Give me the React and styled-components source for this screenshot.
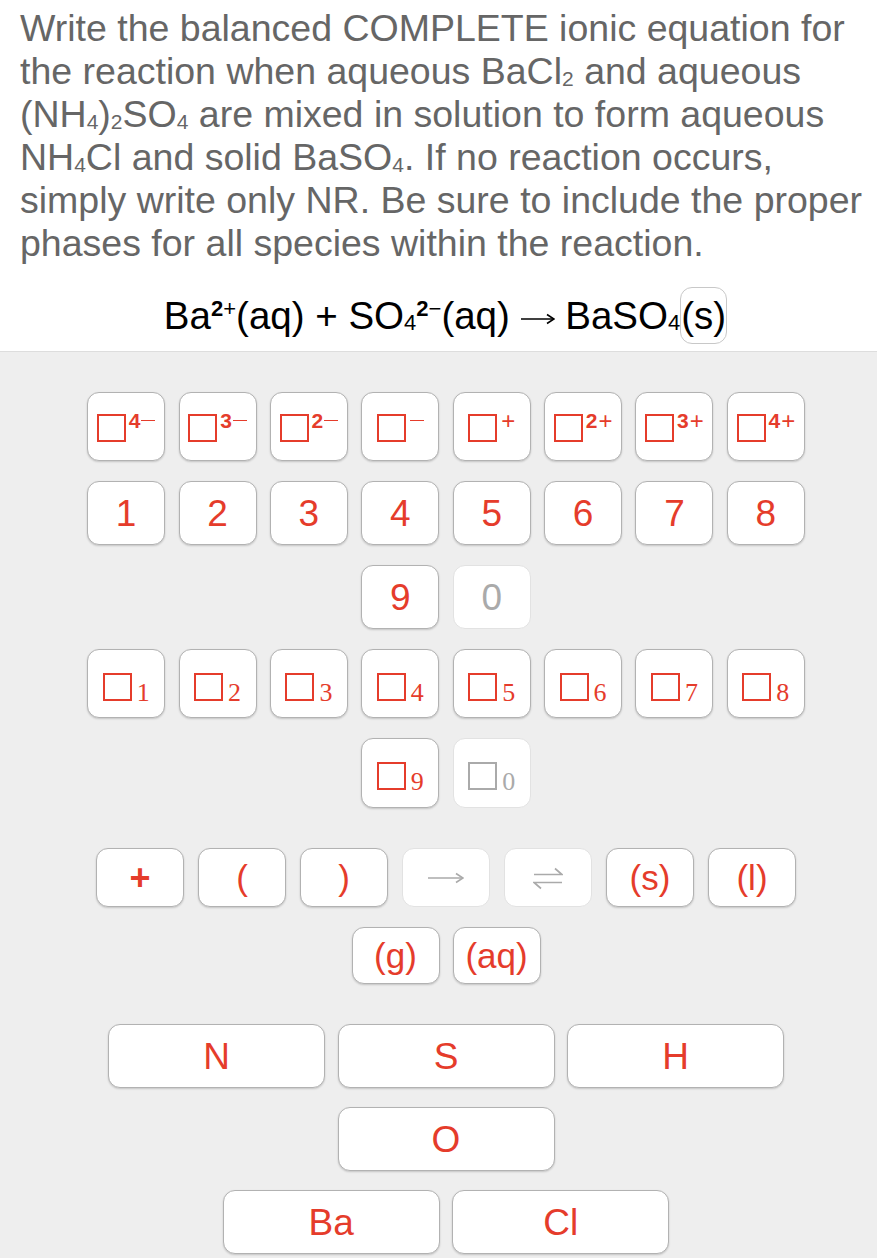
import React from "react"
import styled, { createGlobalStyle } from "styled-components"

const RED = "#e53c2b"
const OFF = "#aaaaaa"

const GlobalStyle = createGlobalStyle`
  html, body {
    margin: 0;
    padding: 0;
    background: #eeeeee;
  }
  body {
    font-family: "Liberation Sans", Arial, sans-serif;
  }
`

const Header = styled.header`
  background: #fff;
  border-bottom: 1px solid #dddddd;
  padding: 7px 10px 7px 20px;
`

const Prompt = styled.p`
  margin: 0;
  font: 37.5px/43px "Liberation Sans", Arial, sans-serif;
  color: #666;
  white-space: nowrap;
`

const PromptSub = styled.sub`
  font-size: 21px;
  line-height: 0;
  vertical-align: -2px;
`

const Equation = styled.div`
  margin-top: 22px;
  padding-left: 4px;
  text-align: center;
  font: 38.5px/43px "Liberation Sans", Arial, sans-serif;
  color: #000;
  white-space: nowrap;
`

const EqSup = styled.sup`
  font-size: 22px;
  line-height: 0;
  vertical-align: 13px;

  b {
    font-weight: bold;
  }
`

const EqSub = styled.sub`
  font-size: 22px;
  line-height: 0;
  vertical-align: -1px;
`

const Cursor = styled.span`
  display: inline-block;
  padding: 6px 0;
  border: 1px solid #c8c8c8;
  border-radius: 12px;
`

const Pad = styled.main`
  display: flex;
  flex-direction: column;
  align-items: center;
  gap: 40px;
  padding: 40px 0 4px 15px;
`

const Section = styled.div`
  display: flex;
  flex-direction: column;
  align-items: center;
  gap: ${(p) => p.$gap}px;
`

const Row = styled.div`
  display: flex;
  justify-content: center;
  gap: ${(p) => p.$gap}px;
`

const Key = styled.button`
  box-sizing: border-box;
  width: ${(p) => p.$w}px;
  height: ${(p) => p.$h}px;
  display: flex;
  align-items: center;
  justify-content: center;
  padding: 0;
  background: #fff;
  border-radius: 12px;
  border: 1px solid ${(p) => (p.$off ? "#e2e2e2" : "#b2b2b2")};
  box-shadow: ${(p) => (p.$off ? "none" : "0 1px 2px rgba(0, 0, 0, 0.18)")};
  color: ${(p) => (p.$off ? OFF : RED)};
  font: ${(p) => (p.$bold ? "bold " : "")}${(p) => p.$size || 37}px/1 "Liberation Sans", Arial, sans-serif;
  cursor: pointer;
`

const Box = styled.span`
  display: inline-block;
  box-sizing: border-box;
  width: 29px;
  height: 28px;
  border: 2.6px solid currentColor;
`

const Charge = styled.span`
  display: inline-flex;
  align-items: flex-start;
  margin-top: 2px;
`

const ChargeText = styled.span`
  display: inline-flex;
  align-items: center;
  margin-left: 3px;
  margin-top: -2px;
  height: 18px;
`

const ChargeNum = styled.span`
  font: bold 21px/1 "Liberation Sans", Arial, sans-serif;
`

const Minus = styled.span`
  display: inline-block;
  width: 14px;
  height: 1.6px;
  margin-left: 1px;
  background: currentColor;
`

const Plus = styled.span`
  font: 24px/1 "Liberation Sans", Arial, sans-serif;
  margin-left: 1px;
`

const Subscript = styled.span`
  display: inline-flex;
  align-items: flex-end;
  margin-top: 6px;
`

const SubNum = styled.span`
  font: 26px/1 "Liberation Serif", "Times New Roman", serif;
  margin-left: 5px;
  margin-bottom: -5px;
`

const ArrowSvg = styled.svg`
  display: inline-block;
  vertical-align: ${(p) => p.$valign || 0}px;
`

const Arrow = ({ width = 36, valign }) => (
  <ArrowSvg $valign={valign} width={width} height="12" viewBox={`0 0 ${width} 12`} fill="none" stroke="currentColor" strokeWidth="1.6">
    <path d={`M0 6 H${width - 1}`} />
    <path d={`M${width - 8} 1.5 L${width - 1} 6 L${width - 8} 10.5`} />
  </ArrowSvg>
)

const Equilibrium = () => (
  <svg width="30" height="24" viewBox="0 0 30 24" fill="none" stroke="currentColor" strokeWidth="1.7">
    <path d="M1 8.5 H29 L22 2.5" />
    <path d="M29 16.5 H1 L8 22.5" />
  </svg>
)

const ChargeKey = ({ n, sign }) => (
  <Key $w={78} $h={69}>
    <Charge>
      <Box />
      <ChargeText>
        {n && <ChargeNum>{n}</ChargeNum>}
        {sign === "-" ? <Minus /> : <Plus>+</Plus>}
      </ChargeText>
    </Charge>
  </Key>
)

const SubKey = ({ n, off, h = 69 }) => (
  <Key $w={78} $h={h} $off={off}>
    <Subscript>
      <Box />
      <SubNum>{n}</SubNum>
    </Subscript>
  </Key>
)

const charges = [
  ["4", "-"],
  ["3", "-"],
  ["2", "-"],
  ["", "-"],
  ["", "+"],
  ["2", "+"],
  ["3", "+"],
  ["4", "+"],
]

export default function App() {
  return (
    <>
      <GlobalStyle />
      <Header>
        <Prompt>
          Write the balanced COMPLETE ionic equation for
          <br />
          the reaction when aqueous BaCl<PromptSub>2</PromptSub> and aqueous
          <br />
          (NH<PromptSub>4</PromptSub>)<PromptSub>2</PromptSub>SO<PromptSub>4</PromptSub> are mixed in
          solution to form aqueous
          <br />
          NH<PromptSub>4</PromptSub>Cl and solid BaSO<PromptSub>4</PromptSub>. If no reaction occurs,
          <br />
          simply write only NR. Be sure to include the proper
          <br />
          phases for all species within the reaction.
        </Prompt>
        <Equation>
          Ba<EqSup><b>2</b>+</EqSup>(aq) + SO<EqSub>4</EqSub>
          <EqSup><b>2</b>−</EqSup>(aq) <Arrow width={34} valign={4} /> BaSO<EqSub>4</EqSub>
          <Cursor>(s)</Cursor>
        </Equation>
      </Header>

      <Pad>
        <Section $gap={20}>
          <Row $gap={13.4}>
            {charges.map(([n, s], i) => (
              <ChargeKey key={i} n={n} sign={s} />
            ))}
          </Row>
          <Row $gap={13.4}>
            {[1, 2, 3, 4, 5, 6, 7, 8].map((d) => (
              <Key key={d} $w={78} $h={64}>
                {d}
              </Key>
            ))}
          </Row>
          <Row $gap={13.4}>
            <Key $w={78} $h={64}>
              9
            </Key>
            <Key $w={78} $h={64} $off>
              0
            </Key>
          </Row>
          <Row $gap={13.4}>
            {[1, 2, 3, 4, 5, 6, 7, 8].map((d) => (
              <SubKey key={d} n={d} />
            ))}
          </Row>
          <Row $gap={13.4}>
            <SubKey n={9} h={70} />
            <SubKey n={0} h={70} off />
          </Row>
        </Section>

        <Section $gap={20}>
          <Row $gap={14}>
            <Key $w={88} $h={59} $size={36} $bold>
              +
            </Key>
            <Key $w={88} $h={59} $size={35}>
              (
            </Key>
            <Key $w={88} $h={59} $size={35}>
              )
            </Key>
            <Key $w={88} $h={59} $off>
              <Arrow width={36} />
            </Key>
            <Key $w={88} $h={59} $off>
              <Equilibrium />
            </Key>
            <Key $w={88} $h={59} $size={35}>
              (s)
            </Key>
            <Key $w={88} $h={59} $size={35}>
              (l)
            </Key>
          </Row>
          <Row $gap={13}>
            <Key $w={88} $h={57} $size={35}>
              (g)
            </Key>
            <Key $w={88} $h={57} $size={35}>
              (aq)
            </Key>
          </Row>
        </Section>

        <Section $gap={19}>
          <Row $gap={12.5}>
            <Key $w={217} $h={64}>N</Key>
            <Key $w={217} $h={64}>S</Key>
            <Key $w={217} $h={64}>H</Key>
          </Row>
          <Row $gap={12.5}>
            <Key $w={217} $h={64}>O</Key>
          </Row>
          <Row $gap={12.5}>
            <Key $w={217} $h={64}>Ba</Key>
            <Key $w={217} $h={64}>Cl</Key>
          </Row>
        </Section>
      </Pad>
    </>
  )
}
